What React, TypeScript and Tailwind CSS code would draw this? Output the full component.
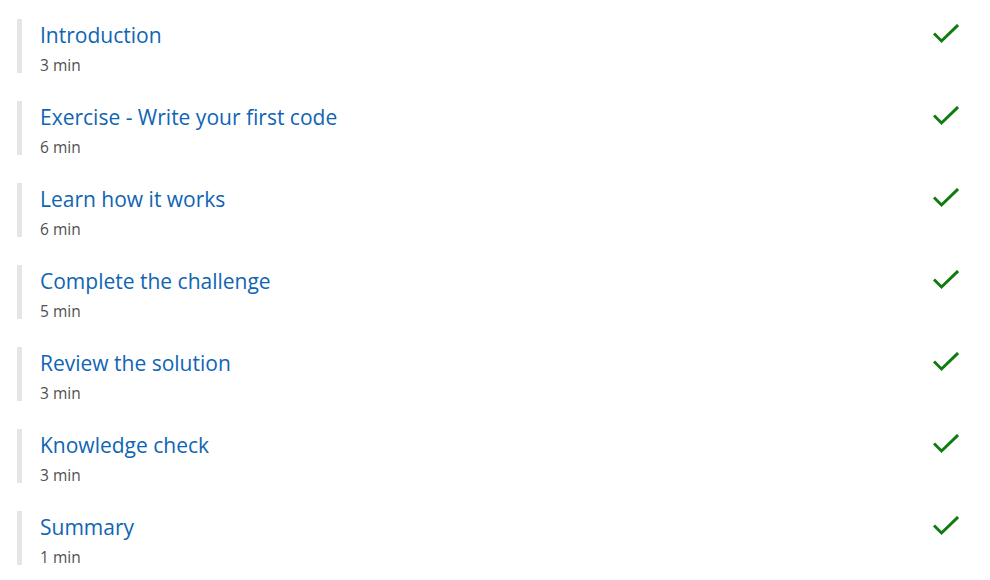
const units = [
  { title: 'Introduction', time: '3 min' },
  { title: 'Exercise - Write your first code', time: '6 min' },
  { title: 'Learn how it works', time: '6 min' },
  { title: 'Complete the challenge', time: '5 min' },
  { title: 'Review the solution', time: '3 min' },
  { title: 'Knowledge check', time: '3 min' },
  { title: 'Summary', time: '1 min' },
]

const Check = () => (
  <svg width="26" height="20" viewBox="0 0 26 20" className="shrink-0">
    <path d="M2 10.5 L8.5 17 L24 2" fill="none" stroke="#107c10" strokeWidth="3" strokeLinecap="square" />
  </svg>
)

export default function App() {
  return (
    <div className="min-h-screen bg-white pt-[19px] pl-[17px] pr-[31px] font-['Open_Sans',sans-serif]">
      <ul className="flex flex-col gap-[28px]">
        {units.map((u) => (
          <li key={u.title} className="flex items-start justify-between">
            <div className="flex h-[54px] border-l-[5px] border-[#e6e6e6] pl-[18px]">
              <div className="flex flex-col">
                <span className="text-[21px] leading-[33px] text-[#0f65b3]">{u.title}</span>
                <span className="mt-[2px] text-[15.5px] leading-[22px] text-[#505050]">{u.time}</span>
              </div>
            </div>
            <div className="pt-[5px]">
              <Check />
            </div>
          </li>
        ))}
      </ul>
    </div>
  )
}
